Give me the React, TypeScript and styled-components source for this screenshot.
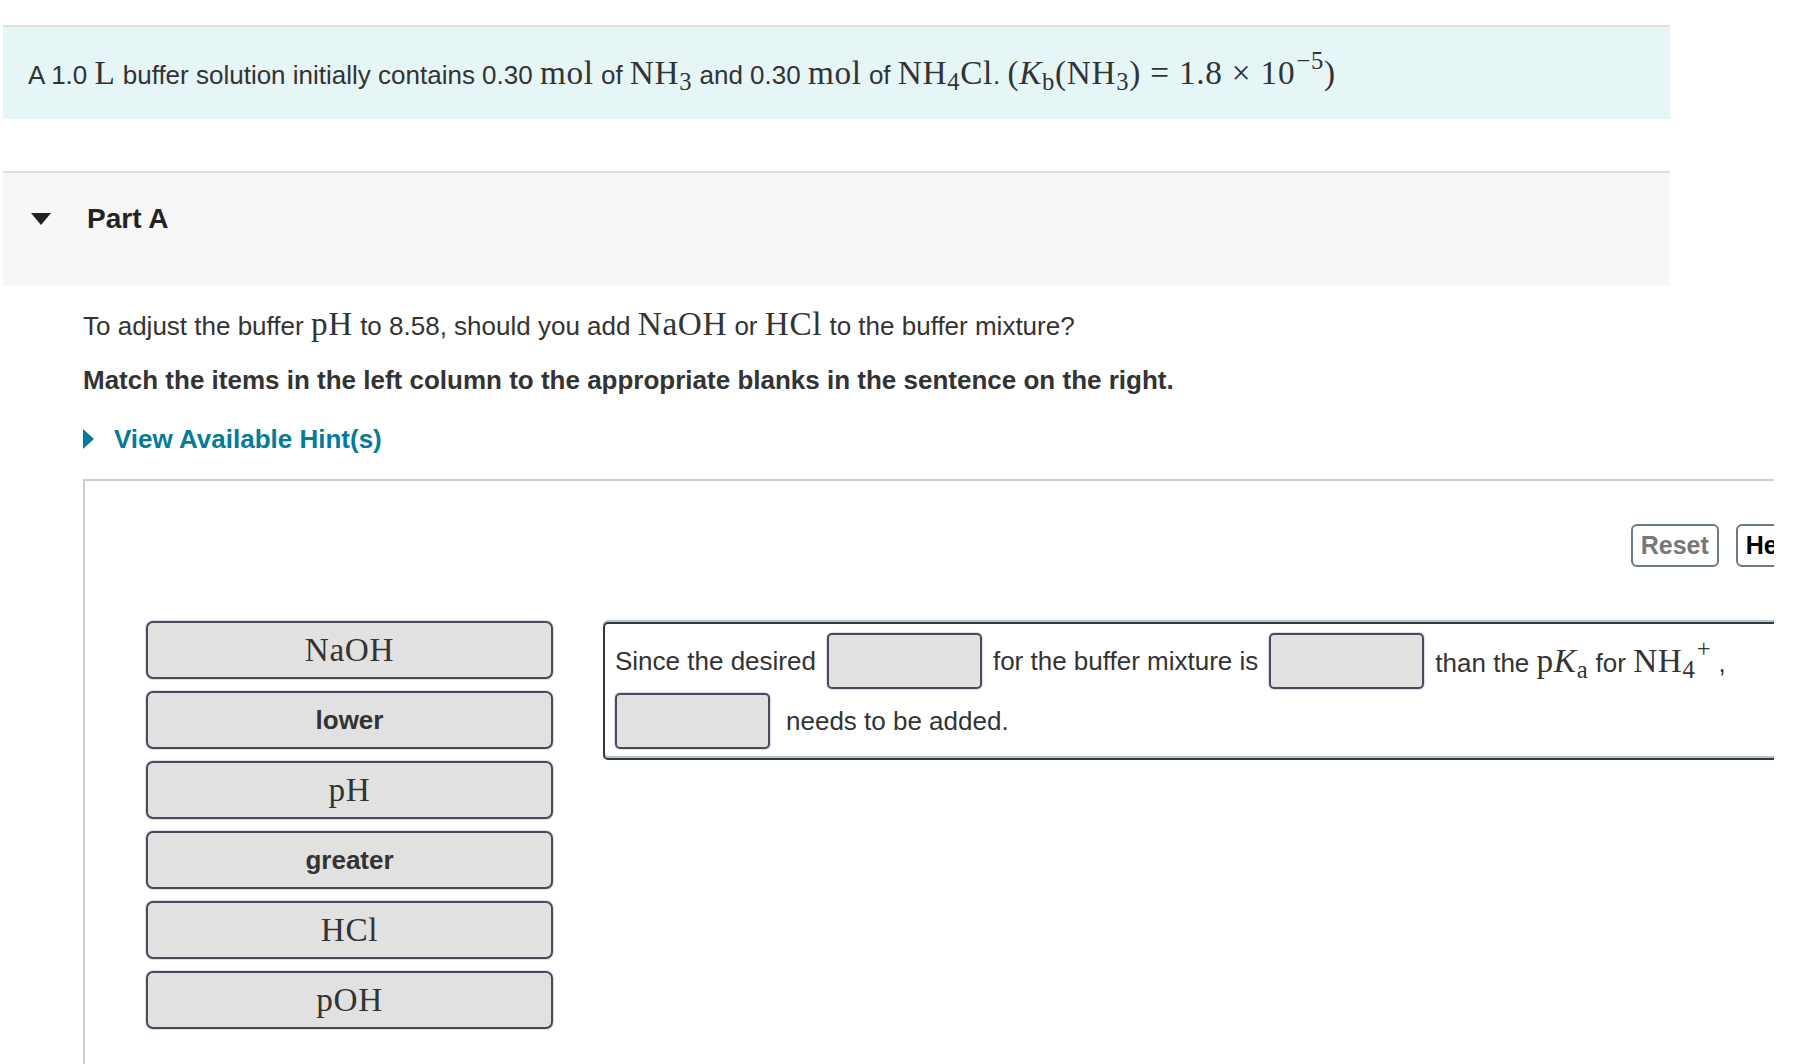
import styled, { createGlobalStyle } from "styled-components";

const GlobalStyle = createGlobalStyle`
  html, body {
    margin: 0;
    padding: 0;
    background: #ffffff;
  }
  body {
    font-family: "Liberation Sans", Arial, Helvetica, sans-serif;
    font-size: 26px;
    color: #333333;
  }
`;

const Page = styled.div`
  width: 1774px;
  height: 1064px;
  overflow: hidden;
  padding: 25px 0 0 3px;
  box-sizing: border-box;
`;

const Intro = styled.section`
  width: 1667px;
  border-top: 2px solid #dedede;
  background: #e6f5f6;
  height: 94px;
  box-sizing: border-box;
  display: flex;
  align-items: center;
  padding-left: 25px;
`;

const PartHeader = styled.div`
  width: 1667px;
  margin-top: 52px;
  border-top: 2px solid #dedede;
  background: #f7f7f7;
  box-sizing: border-box;
  height: 115px;
  display: flex;
  align-items: flex-start;
  padding: 28px 0 0 28px;
`;

const DownArrow = styled.span`
  width: 0;
  height: 0;
  margin-top: 12px;
  margin-right: 36px;
  border-left: 10px solid transparent;
  border-right: 10px solid transparent;
  border-top: 12px solid #222222;
`;

const PartTitle = styled.h2`
  margin: 0;
  font-size: 28px;
  line-height: 36px;
  font-weight: bold;
  color: #222222;
`;

const PartBody = styled.div`
  padding: 20px 0 0 80px;
`;

const Question = styled.p`
  margin: 0;
  line-height: 36px;
`;

const Instruction = styled.p`
  margin: 18px 0 0;
  line-height: 36px;
  font-weight: bold;
`;

const HintToggle = styled.div`
  margin-top: 23px;
  display: flex;
  align-items: center;
  gap: 20px;
  color: #047b99;
  font-weight: bold;
  line-height: 36px;
`;

const RightArrow = styled.span`
  width: 0;
  height: 0;
  border-top: 10px solid transparent;
  border-bottom: 10px solid transparent;
  border-left: 11px solid #047b99;
`;

const Panel = styled.div`
  margin-top: 22px;
  width: 1750px;
  border: 2px solid #cccccc;
  box-sizing: border-box;
  padding: 43px 21px 60px 61px;
`;

const Toolbar = styled.div`
  display: flex;
  justify-content: flex-end;
  gap: 17px;
`;

const ToolButton = styled.button<{ $muted?: boolean }>`
  height: 43px;
  padding: 0 8px;
  border: 2px solid #6b7b82;
  border-radius: 6px;
  background: #ffffff;
  font-family: "Liberation Sans", Arial, sans-serif;
  font-size: 25px;
  font-weight: bold;
  color: ${({ $muted }) => ($muted ? "#777777" : "#000000")};
`;

const Workspace = styled.div`
  margin-top: 54px;
  display: grid;
  grid-template-columns: 407px 1fr;
  gap: 50px;
  align-items: start;
`;

const ItemList = styled.div`
  display: flex;
  flex-direction: column;
  gap: 12px;
`;

const Item = styled.div<{ $word?: boolean }>`
  height: 58px;
  box-sizing: border-box;
  border: 2px solid #4a4a58;
  border-radius: 7px;
  box-shadow: 0 0 0 1px #dcdcf0;
  background: #e1e1e1;
  display: flex;
  align-items: center;
  justify-content: center;
  color: #333333;
  font-weight: ${({ $word }) => ($word ? "bold" : "normal")};
`;

const SentenceBox = styled.div`
  margin-top: 1px;
  border: 2px solid #333a3e;
  border-radius: 5px;
  box-shadow: 0 -2px 0 #b3c6cc, inset 0 -2px 0 #b3c6cc;
  padding: 9px 10px 9px 10px;
  display: flex;
  flex-direction: column;
  gap: 4px;
`;

const Line = styled.div<{ $gap?: number }>`
  display: flex;
  align-items: center;
  gap: ${({ $gap }) => $gap ?? 11}px;
  white-space: nowrap;
`;

const DropZone = styled.span`
  width: 155px;
  height: 56px;
  box-sizing: border-box;
  border: 2px solid #4a4a58;
  border-radius: 5px;
  box-shadow: 0 0 0 1px #dcdcf0;
  background: #e1e1e1;
  flex: none;
`;

const M = styled.span`
  font-family: "Liberation Serif", "Times New Roman", serif;
  font-size: 1.28em;
  letter-spacing: 0.02em;
`;

const Var = styled.i`
  font-style: italic;
`;

const Op = styled.span`
  margin: 0 0.28em;
`;

const Sub = styled.span`
  font-size: 0.74em;
  vertical-align: -0.24em;
  line-height: 0;
`;

const Sup = styled.span`
  font-size: 0.74em;
  vertical-align: 0.6em;
  line-height: 0;
  margin-left: 0.05em;
`;

const items = [
  { label: <M>NaOH</M> },
  { label: "lower", word: true },
  { label: <M>pH</M> },
  { label: "greater", word: true },
  { label: <M>HCl</M> },
  { label: <M>pOH</M> },
];

export default function App() {
  return (
    <>
      <GlobalStyle />
      <Page>
        <Intro>
          <span>
            A 1.0 <M>L</M> buffer solution initially contains 0.30 <M>mol</M> of{" "}
            <M>
              NH<Sub>3</Sub>
            </M>{" "}
            and 0.30 <M>mol</M> of{" "}
            <M>
              NH<Sub>4</Sub>Cl
            </M>
            .{" "}
            <M>
              (<Var>K</Var>
              <Sub>b</Sub>(NH<Sub>3</Sub>)<Op>=</Op>1.8<Op>×</Op>10<Sup>−5</Sup>)
            </M>
          </span>
        </Intro>

        <PartHeader>
          <DownArrow />
          <PartTitle>Part A</PartTitle>
        </PartHeader>

        <PartBody>
          <Question>
            To adjust the buffer <M>pH</M> to 8.58, should you add <M>NaOH</M> or{" "}
            <M>HCl</M> to the buffer mixture?
          </Question>
          <Instruction>
            Match the items in the left column to the appropriate blanks in the
            sentence on the right.
          </Instruction>
          <HintToggle>
            <RightArrow />
            View Available Hint(s)
          </HintToggle>

          <Panel>
            <Toolbar>
              <ToolButton $muted>Reset</ToolButton>
              <ToolButton>Help</ToolButton>
            </Toolbar>
            <Workspace>
              <ItemList>
                {items.map((it, i) => (
                  <Item key={i} $word={it.word}>
                    {it.label}
                  </Item>
                ))}
              </ItemList>
              <SentenceBox>
                <Line>
                  <span>Since the desired</span>
                  <DropZone />
                  <span>for the buffer mixture is</span>
                  <DropZone />
                  <span>
                    than the{" "}
                    <M>
                      p<Var>K</Var>
                      <Sub>a</Sub>
                    </M>{" "}
                    for{" "}
                    <M>
                      NH<Sub>4</Sub>
                      <Sup>+</Sup>
                    </M>{" "}
                    ,
                  </span>
                </Line>
                <Line $gap={16}>
                  <DropZone />
                  <span>needs to be added.</span>
                </Line>
              </SentenceBox>
            </Workspace>
          </Panel>
        </PartBody>
      </Page>
    </>
  );
}
